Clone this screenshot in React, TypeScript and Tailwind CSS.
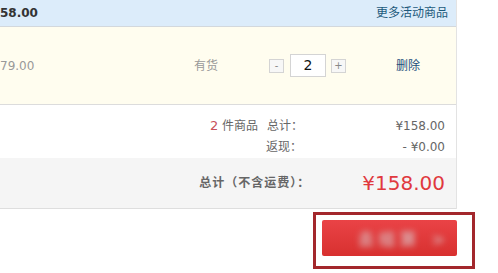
const num = { fontFamily: '"DejaVu Sans", Verdana, sans-serif' };
const cjk = { fontFamily: '"DejaVu Sans", "Noto Sans CJK SC", sans-serif' };

function QtyBox({ label }: { label: string }) {
  return (
    <span className="flex h-[14px] w-[15px] items-center justify-center border border-[#d4d4d4] bg-[#f7f7f7] text-[10px] leading-none text-[#888]">
      {label}
    </span>
  );
}

export default function App() {
  return (
    <div className="h-[273px] w-[498px] overflow-hidden bg-white text-[12px] text-[#666]" style={cjk}>
      <div className="w-[457px] border-r border-[#e3e3e3]">
        <div className="flex h-[27px] items-center justify-between border-b border-[#d3d8dc] bg-[#dcecfa] pr-[8px]">
          <span className="text-[12px] font-bold text-[#333]" style={num}>58.00</span>
          <span className="text-[12px] text-[#1c5a7c]">更多活动商品</span>
        </div>

        <div className="flex h-[78px] items-center border-b border-[#dcdcdc] bg-[#fffdef]">
          <span className="w-[194px] text-[12px] text-[#999]" style={num}>79.00</span>
          <span className="w-[75px] text-[#999]">有货</span>
          <div className="flex items-center">
            <QtyBox label="-" />
            <span className="ml-[6px] flex h-[23px] w-[36px] items-center justify-center border border-[#d4d4d4] bg-white text-[14px] text-[#111]" style={num}>2</span>
            <span className="ml-[5px]"><QtyBox label="+" /></span>
          </div>
          <span className="ml-[50px] text-[#1c4f7c]">删除</span>
        </div>

        <div className="flex h-[53px] flex-col pt-[10px]">
          <div className="flex h-[21px] items-center">
            <span className="w-[258px] text-right">
              <span className="text-[13px] text-[#c8505a]" style={num}>2</span> 件商品
            </span>
            <span className="ml-[9px] w-[40px]">总计：</span>
            <span className="flex-1 pr-[11px] text-right" style={num}>¥158.00</span>
          </div>
          <div className="flex h-[21px] items-center">
            <span className="ml-[266px] w-[41px]">返现：</span>
            <span className="flex-1 pr-[11px] text-right" style={num}>- ¥0.00</span>
          </div>
        </div>

        <div className="flex h-[51px] items-center justify-end border-b border-[#dedede] bg-[#f5f5f5] pr-[11px]">
          <span className="font-bold tracking-[1px] text-[#666]">总计（不含运费）：</span>
          <span className="ml-[52px] text-[20px] text-[#e0393e]" style={num}>¥158.00</span>
        </div>
      </div>

      <div className="flex pl-[313px] pt-[3px]">
        <div className="h-[57px] w-[162px] border-[3px] border-[#a3282c] pl-[6px] pt-[5px]">
          <div className="relative flex h-[36px] w-[135px] items-center rounded-[2px] bg-gradient-to-b from-[#ea4346] to-[#d8302f]">
            <span className="absolute left-[36px] top-[8px] text-[16px] font-bold tracking-[5px] text-[#d9b3b6] blur-[3px]">去结算 {'>'}</span>
          </div>
        </div>
      </div>
    </div>
  );
}
